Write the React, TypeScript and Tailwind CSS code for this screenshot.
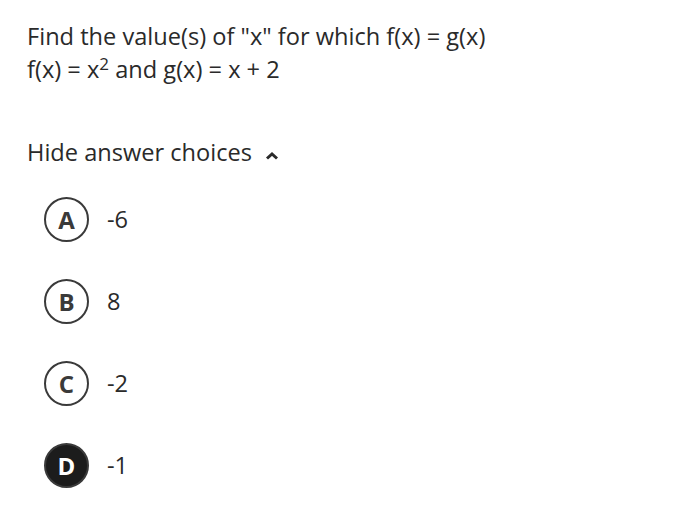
export default function App() {
  const choices = [
    { letter: "A", value: "-6", selected: false },
    { letter: "B", value: "8", selected: false },
    { letter: "C", value: "-2", selected: false },
    { letter: "D", value: "-1", selected: true },
  ];

  return (
    <div
      className="h-[507px] w-[700px] bg-white text-[#2a2a2a]"
      style={{ fontFamily: '"Open Sans", sans-serif' }}
    >
      <div className="px-[27px] pt-[20px]">
        <p className="text-[23.6px] leading-[33px]">Find the value(s) of "x" for which f(x) = g(x)</p>
        <p className="text-[23.6px] leading-[33px]">
          f(x) = x<sup className="text-[17px]">2</sup> and g(x) = x + 2
        </p>

        <button type="button" className="mt-[50px] flex items-center gap-[13px] text-[23.6px] leading-[33px]">
          Hide answer choices
          <svg width="14" height="9" viewBox="0 0 14 9" className="mt-[6px]">
            <path d="M2 7.5 L7 3 L12 7.5" fill="none" stroke="#2a2a2a" strokeWidth="3" />
          </svg>
        </button>

        <div className="mt-[28px] flex flex-col gap-[37px] pl-[17px]">
          {choices.map((c) => (
            <div key={c.letter} className="flex items-center gap-[18px]">
              <div
                className={`flex h-[45px] w-[45px] items-center justify-center rounded-full border-[2.5px] border-[#3a3a3a] ${
                  c.selected ? "bg-[#1c1c1c] text-white" : "bg-white text-[#3a3a3a]"
                }`}
              >
                <span className="text-[24px] leading-none font-bold">{c.letter}</span>
              </div>
              <span className="text-[23.6px]">{c.value}</span>
            </div>
          ))}
        </div>
      </div>
    </div>
  );
}
